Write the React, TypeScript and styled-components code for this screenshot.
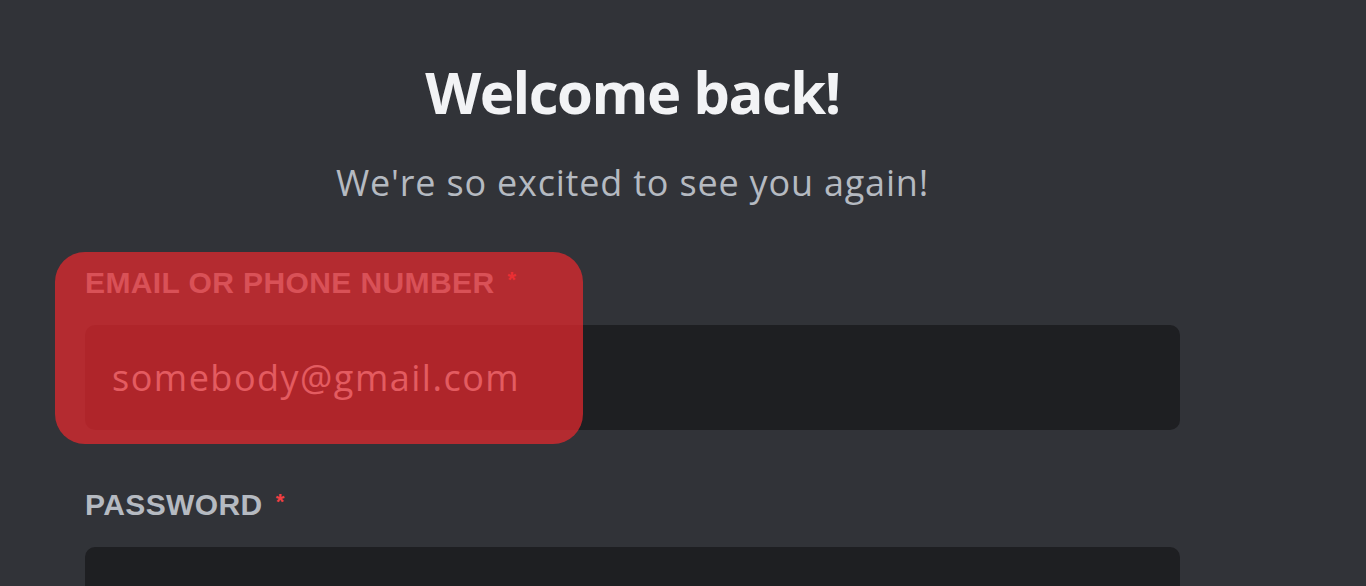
import React from 'react';
import styled, { createGlobalStyle } from 'styled-components';

const GlobalStyle = createGlobalStyle`
  html, body {
    margin: 0;
    padding: 0;
    background: #313338;
  }
  * {
    box-sizing: border-box;
  }
`;

const Page = styled.div`
  height: 586px;
  overflow: hidden;
  background: #313338;
  padding: 57px 0 0 85px;
`;

const Form = styled.div`
  width: 1095px;
  display: flex;
  flex-direction: column;
`;

const Header = styled.div`
  display: flex;
  flex-direction: column;
  align-items: center;
  text-align: center;
`;

const Title = styled.h1`
  margin: 0;
  font-family: 'Open Sans', 'Noto Sans', sans-serif;
  font-weight: 700;
  font-size: 58px;
  line-height: 70px;
  letter-spacing: -1.5px;
  color: #f2f3f5;
`;

const Subtitle = styled.p`
  margin: 34px 0 0;
  font-family: 'Open Sans', sans-serif;
  font-weight: 400;
  font-size: 36px;
  line-height: 44px;
  letter-spacing: 0.8px;
  color: #b5bac1;
`;

const Field = styled.div<{ $top: number }>`
  position: relative;
  margin-top: ${(p) => p.$top}px;
  display: flex;
  flex-direction: column;
`;

const Label = styled.label`
  font-family: 'Liberation Sans', Arial, sans-serif;
  font-weight: 700;
  font-size: 30px;
  line-height: 36px;
  letter-spacing: 0.4px;
  text-transform: uppercase;
  color: #b5bac1;
`;

const Required = styled.span`
  display: inline-block;
  margin-left: 13px;
  padding-top: 4px;
  color: #f23f42;
  font-size: 22px;
  vertical-align: top;
  line-height: 22px;
`;

const Input = styled.div`
  margin-top: 24px;
  height: 105px;
  border-radius: 10px;
  background: #1e1f22;
  padding: 0 27px;
  display: flex;
  align-items: center;
  font-family: 'Open Sans', sans-serif;
  font-size: 36px;
  letter-spacing: 1.5px;
  color: #dbdee1;
`;

const Highlight = styled.div`
  position: absolute;
  left: -30px;
  top: -13px;
  width: 528px;
  height: 192px;
  border-radius: 30px;
  background: rgba(232, 40, 46, 0.72);
  pointer-events: none;
`;

export default function App() {
  return (
    <>
      <GlobalStyle />
      <Page>
        <Form>
          <Header>
            <Title>Welcome back!</Title>
            <Subtitle>We're so excited to see you again!</Subtitle>
          </Header>
          <Field $top={60}>
            <Label>
              Email or Phone Number<Required>*</Required>
            </Label>
            <Input>somebody@gmail.com</Input>
            <Highlight />
          </Field>
          <Field $top={57}>
            <Label>
              Password<Required>*</Required>
            </Label>
            <Input />
          </Field>
        </Form>
      </Page>
    </>
  );
}
